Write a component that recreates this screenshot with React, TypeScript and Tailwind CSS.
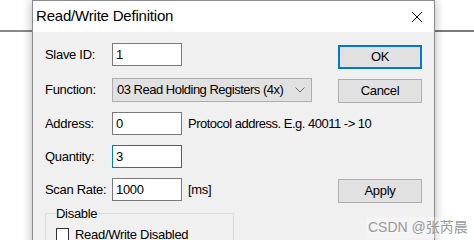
import React from "react";

function Field({ label, value, focused }: { label: string; value: string; focused?: boolean }) {
  return (
    <div className="flex items-center h-[23px] shrink-0">
      <span className="w-[67px]">{label}</span>
      <div
        className={
          "w-[70px] h-full bg-white flex items-center pl-[3px] border " +
          (focused ? "border-[#0078d7]" : "border-[#7a7a7a]")
        }
      >
        {value}
      </div>
    </div>
  );
}

function Button({ children, primary }: { children: React.ReactNode; primary?: boolean }) {
  return (
    <div
      className={
        "w-[84px] h-[24px] flex items-center justify-center bg-[#e1e1e1] " +
        (primary ? "border-2 border-[#0078d7]" : "border border-[#adadad]")
      }
    >
      {children}
    </div>
  );
}

export default function App(): React.JSX.Element {
  return (
    <div
      className="relative w-[474px] h-[240px] overflow-hidden bg-white flex text-black text-[13px] tracking-[-0.3px]"
      style={{ fontFamily: '"Liberation Sans", Arial, sans-serif' }}
    >
      {/* window behind */}
      <div className="w-[32px] shrink-0 pt-[30px]">
        <div className="h-[2px] bg-[#8a8a8a]" />
      </div>

      {/* dialog */}
      <div className="w-[403px] shrink-0 h-[300px] border border-[#8c8c8c] bg-[#f0f0f0] shadow-[0_0_10px_rgba(0,0,0,0.3)] z-10 flex flex-col">
        <div className="h-[31px] bg-white flex items-center justify-between pl-[3px] pr-[11px]">
          <span className="text-[15px] tracking-[-0.2px]">Read/Write Definition</span>
          <svg width="12" height="12" viewBox="0 0 12 12" className="mt-[1px]">
            <path d="M1 1L11 11M11 1L1 11" stroke="#111" strokeWidth="1" fill="none" />
          </svg>
        </div>

        <div className="flex">
          <div className="flex flex-col pl-[12px] w-[305px] shrink-0">
            <div className="mt-[11px]">
              <Field label="Slave ID:" value="1" />
            </div>
            <div className="mt-[12px] flex items-center h-[24px]">
              <span className="w-[67px]">Function:</span>
              <div className="w-[200px] h-full bg-[#e1e1e1] border border-[#adadad] flex items-center justify-between pl-[4px] pr-[6px]">
                <span className="whitespace-nowrap tracking-[-0.5px]">03 Read Holding Registers (4x)</span>
                <svg width="10" height="6" viewBox="0 0 10 6">
                  <path d="M0.5 0.5L5 5L9.5 0.5" stroke="#666" strokeWidth="1" fill="none" />
                </svg>
              </div>
            </div>
            <div className="mt-[10px] flex items-center">
              <Field label="Address:" value="0" />
              <span className="ml-[6px] whitespace-nowrap tracking-[-0.5px]">Protocol address. E.g. 40011 -&gt; 10</span>
            </div>
            <div className="mt-[10px]">
              <Field label="Quantity:" value="3" focused />
            </div>
            <div className="mt-[10px] flex items-center">
              <Field label="Scan Rate:" value="1000" />
              <span className="ml-[6px]">[ms]</span>
            </div>
            <fieldset className="mt-[3px] w-[189px] h-[60px] border border-[#dcdcdc] pl-[10px]">
              <legend className="px-0">Disable</legend>
              <div className="flex items-center gap-[6px] mt-[1px]">
                <div className="w-[13px] h-[13px] bg-white border border-[#333]" />
                <span>Read/Write Disabled</span>
              </div>
            </fieldset>
          </div>

          <div className="flex flex-col pt-[13px]">
            <Button primary>OK</Button>
            <div className="mt-[10px]">
              <Button>Cancel</Button>
            </div>
            <div className="mt-[76px]">
              <Button>Apply</Button>
            </div>
          </div>
        </div>
      </div>

      <div className="flex-1 pt-[30px]">
        <div className="h-[2px] bg-[#7a7a7a]" />
      </div>

      <div
        className="absolute left-[366px] top-[217px] z-20 px-[2px] bg-white/30 text-[#9a9a9a] text-[14px] tracking-normal"
        style={{ fontFamily: '"Liberation Sans", "Noto Sans CJK SC", sans-serif' }}
      >
        CSDN @张芮晨
      </div>
    </div>
  );
}
